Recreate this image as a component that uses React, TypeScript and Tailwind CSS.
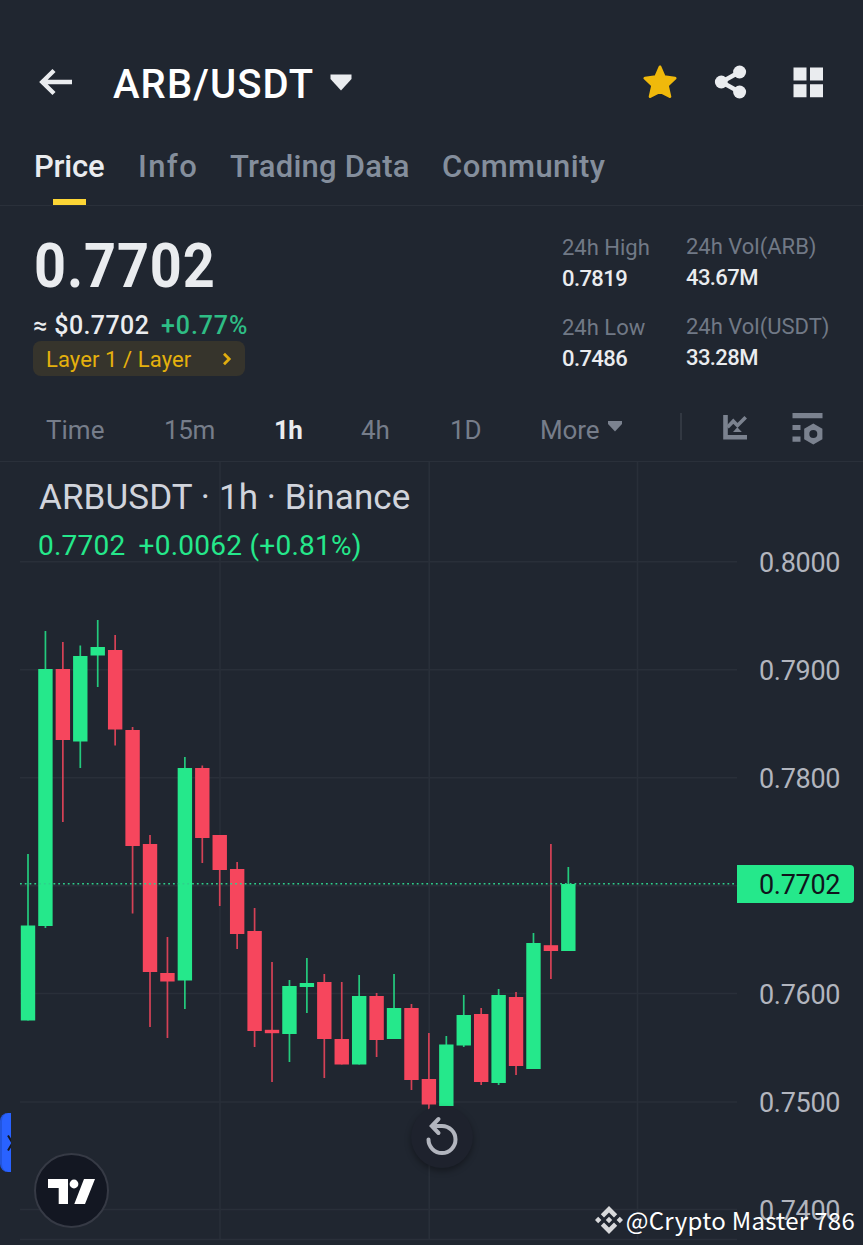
import { useState } from 'react';
import clsx from 'clsx';

const tabs = [
  { label: 'Price', className: 'w-[104px] tracking-[-0.2px]' },
  { label: 'Info', className: 'w-[92px] tracking-[1.4px]' },
  { label: 'Trading Data', className: 'w-[212px] tracking-[0.25px]' },
  { label: 'Community', className: 'tracking-[0.4px]' },
];

const stats = [
  [
    { label: '24h High', value: '0.7819' },
    { label: '24h Low', value: '0.7486' },
  ],
  [
    { label: '24h Vol(ARB)', value: '43.67M' },
    { label: '24h Vol(USDT)', value: '33.28M' },
  ],
];

const intervals = [
  { label: 'Time', className: 'w-[118px]' },
  { label: '15m', className: 'w-[110px] tracking-[-0.3px]' },
  { label: '1h', className: 'w-[87px] tracking-[-0.6px]' },
  { label: '4h', className: 'w-[89px]' },
  { label: '1D', className: 'w-[90px]' },
];

const axis = ['0.8000', '0.7900', '0.7800', '', '0.7600', '0.7500', '0.7400'];

// [direction, high, body top, body bottom, low] in chart pixels
const candles: [string, number, number, number, number][] = [
  ['up', 392, 463.5, 558.5, 558.5],
  ['up', 169, 207, 464, 466],
  ['down', 180, 207, 278, 360],
  ['up', 183.5, 194, 279.5, 306],
  ['up', 158, 185, 193.5, 225],
  ['down', 173, 188, 267.5, 283.5],
  ['down', 265, 268, 384, 451.5],
  ['down', 373, 382, 510, 565],
  ['down', 475, 511, 519.5, 576],
  ['up', 295, 306, 518.5, 547],
  ['down', 303.5, 306, 376, 401],
  ['down', 373, 373, 408, 444],
  ['down', 400, 407, 472, 487],
  ['down', 446, 469, 569, 585],
  ['down', 500, 567.8, 571.2, 620],
  ['up', 518, 524, 572, 600],
  ['up', 496, 521, 525, 551],
  ['down', 512, 520, 577, 616],
  ['down', 520, 577, 602.5, 602.5],
  ['up', 513, 534, 602.5, 602.5],
  ['down', 531, 534, 578, 595],
  ['up', 512, 546, 577, 577],
  ['down', 542, 546, 618, 628],
  ['down', 571, 617, 642.5, 654],
  ['up', 574, 582.5, 644, 644],
  ['up', 533, 553, 583.5, 585],
  ['down', 546, 552, 620, 623],
  ['up', 527, 533, 621, 623],
  ['down', 530, 535, 604, 613],
  ['up', 471, 481, 607, 607],
  ['down', 382, 483.2, 489, 517],
  ['up', 405, 422, 489, 489],
];

function Header() {
  return (
    <div className="flex h-12 items-center pl-[38px] pr-[39px]">
      <svg width="36" height="30" viewBox="38 67 36 30" fill="none" stroke="#eaecef" strokeWidth="4.4">
        <path d="M72 82H43M54 70.5L42.3 82L54 93.5" />
      </svg>
      <h1 className="ml-[39px] mt-1.5 text-[40px] leading-none font-medium tracking-[1.1px] text-white">ARB/USDT</h1>
      <svg className="ml-4" width="22" height="17" viewBox="0 0 22 17" fill="#eaecef">
        <path d="M.5 .5h21V5L11 16.5L.5 5z" />
      </svg>
      <div className="ml-auto flex items-center">
        <svg width="34" height="34" viewBox="0 0 34 34">
          <path
            d="M17 2L21.2 11.8L32 13.2L24.3 20.5L26.8 31.5L17 26.3L7.2 31.5L9.7 20.5L2 13.2L12.8 11.8Z"
            fill="#f0b90b"
            stroke="#f0b90b"
            strokeWidth="3"
            strokeLinejoin="round"
          />
        </svg>
        <svg className="ml-[37px]" width="34" height="34" viewBox="714 65 34 34" fill="#eaecef">
          <path d="M739.5 72L721.5 82L739.5 92" fill="none" stroke="#eaecef" strokeWidth="4.4" />
          <circle cx="721.3" cy="82" r="6.4" />
          <circle cx="739.6" cy="72" r="6.5" />
          <circle cx="739.6" cy="92" r="6.5" />
        </svg>
        <svg className="ml-[45px]" width="31" height="31" viewBox="0 0 31 31" fill="#eaecef">
          <path d="M.5 .5h13v13H.5zM17 .5h13v13H17zM.5 17.2h13v13H.5zM17 17.2h13v13H17z" />
        </svg>
      </div>
    </div>
  );
}

function Summary() {
  return (
    <section className="flex h-[190px]">
      <div className="w-[528px] pl-[34px] pt-[30px]">
        <div className="flex h-[60px] origin-left scale-x-90 items-center text-[62px] leading-none font-bold tracking-[1px] text-[#eaecef]">
          0.7702
        </div>
        <div className="-ml-px mt-3.5 flex h-[30px] items-center text-[25px] leading-none font-medium tracking-[0.4px]">
          <span className="w-[128px] whitespace-nowrap text-[#eaecef]">≈ $0.7702</span>
          <span className="tracking-[0.9px] text-[#2ebd85]">+0.77%</span>
        </div>
        <button className="-ml-px mt-px flex h-[35px] w-[212px] items-center justify-between rounded-lg bg-[#36342c] pt-0.5 pl-[13px] pr-[13px] text-[22px] leading-none tracking-[0.1px] text-[#e5b10d]">
          Layer 1 / Layer
          <svg className="mb-0.5" width="10" height="14" viewBox="0 0 10 14" fill="none" stroke="#e0ad10" strokeWidth="2.8">
            <path d="M2 1.8L7.2 7L2 12.2" />
          </svg>
        </button>
      </div>
      <div className="flex pt-[25px] pl-[34px]">
        {stats.map((column, i) => (
          <div key={i} className={clsx('space-y-[18px]', i === 0 && 'w-[124px] pt-px')}>
            {column.map((item) => (
              <div key={item.label} className="whitespace-nowrap text-[22px] leading-[31px]">
                <div className="text-[#717986]">{item.label}</div>
                <div className="font-medium tracking-[-0.6px] text-[#eaecef]">{item.value}</div>
              </div>
            ))}
          </div>
        ))}
      </div>
    </section>
  );
}

function IntervalBar() {
  const [active, setActive] = useState('1h');

  return (
    <div className="flex h-[66px] items-center border-b border-[#2a303a] pl-[46px] text-[26px] leading-none text-[#767d8a]">
      {intervals.map((item) => (
        <button
          key={item.label}
          onClick={() => setActive(item.label)}
          className={clsx('pt-0.5 text-left', item.className, active === item.label && 'font-bold text-[#eaecef]')}
        >
          {item.label}
        </button>
      ))}
      <button className="flex w-[140px] items-center pt-0.5 tracking-[-0.1px]">
        More
        <svg className="ml-[9px] mb-1.5" width="14" height="11" viewBox="0 0 14 11" fill="#7b828f">
          <path d="M0 0h14v3L7 10.5L0 3z" />
        </svg>
      </button>
      <div className="-mt-1 h-[27px] w-0.5 bg-[#323842]" />
      <svg className="ml-[41px] -mt-0.5" width="25" height="25" viewBox="0 0 25 25" fill="none" stroke="#7b828f">
        <path d="M2.5 0V22.2H24" strokeWidth="4.6" />
        <path d="M4.5 12.3L10.3 6.2L14.5 10.5L22.7 2.3" strokeWidth="3.6" />
        <path d="M10 17L14.3 12.3L18.8 17z" fill="#7b828f" stroke="none" />
      </svg>
      <svg className="ml-[44px]" width="31" height="32" viewBox="0 0 31 32" fill="#7b828f">
        <path d="M.5 0h30v5.2H.5zM.5 12h8v5H.5zM.5 23.6h8v5.2H.5z" />
        <path fillRule="evenodd" d="M21.3 10.5L30.4 15.8V26.2L21.3 31.4L12.2 26.2V15.8zM21.3 17a4 4 0 1 0 0 8a4 4 0 1 0 0-8z" />
      </svg>
    </div>
  );
}

function Candles() {
  return (
    <svg className="shrink-0" width="737" height="783" viewBox="0 0 737 783">
      <g stroke="#292f39" strokeWidth="1.6">
        {[99.7, 207.7, 315.7, 423.7, 531.5, 640, 747.5, 777.5].map((y) => (
          <path key={y} d={`M20 ${y}H737`} />
        ))}
        {[220, 429.2, 637.5].map((x) => (
          <path key={x} d={`M${x} 0V777`} />
        ))}
      </g>
      {candles.map(([dir, high, top, bottom, low], i) => {
        const x = 28 + i * 17.43;
        const color = dir === 'up' ? '#25e88b' : '#f6465d';
        return (
          <g key={i} fill={color}>
            <rect x={x - 0.85} y={high} width="1.7" height={low - high} opacity="0.85" />
            <rect x={x - 7.2} y={top} width="14.4" height={bottom - top} />
          </g>
        );
      })}
      <path d="M20 421.8H737" stroke="#2fd08c" strokeWidth="1.6" strokeDasharray="1.8 2.98" />
    </svg>
  );
}

function Chart() {
  return (
    <section className="relative flex h-[783px]">
      <Candles />
      <div className="w-[126px] pt-[47px]">
        {axis.map((price, i) => (
          <div key={i} className="flex h-[108px] items-center pl-[22px] text-[27px] leading-none tracking-[-0.3px] text-[#b2b5be]">
            {price}
          </div>
        ))}
      </div>
      <div className="absolute left-[737px] top-[403px] flex h-[38px] w-[117px] items-center rounded-r-[4px] bg-[#25e88b] pt-0.5 pl-[22px] text-[27px] leading-none tracking-[-0.3px] text-[#10141c]">
        0.7702
      </div>

      <div className="absolute left-[39px] top-4">
        <div className="text-[35px] leading-10 tracking-[0.1px] text-[#d1d4dc]">ARBUSDT · 1h · Binance</div>
        <div className="-ml-px mt-2 flex gap-[13px] text-[28px] leading-10 tracking-[0.25px] text-[#25e88b]">
          <span>0.7702</span>
          <span>+0.0062 (+0.81%)</span>
        </div>
      </div>

      <div className="absolute left-0 top-[651px] flex h-[59px] w-[11px] items-center overflow-hidden rounded-l-lg border-l-2 border-[#2255dd] bg-[#2962ff]">
        <svg className="ml-[5px] shrink-0" width="8" height="18" viewBox="0 0 8 18" fill="none" stroke="#131722" strokeWidth="2">
          <path d="M1 1.5L5.5 9L1 16.5" />
        </svg>
      </div>

      <div className="absolute left-[34px] top-[691px] flex size-[75px] items-center justify-center rounded-full border-2 border-[#363a45] bg-[#131722]">
        <svg className="mt-0.5" width="47" height="25" viewBox="0 0 47 25" fill="#fff">
          <path d="M0 0H20V25H10.7V9H0zM36 0H47L37 25H26.3z" />
          <circle cx="26" cy="5" r="4.4" />
        </svg>
      </div>

      <button className="absolute left-[411px] top-[644px] flex size-[62px] items-center justify-center rounded-full bg-[#1e222d] shadow-[0_3px_6px_rgba(0,0,0,0.35)]">
        <svg width="40" height="44" viewBox="422 1115 40 44" fill="none" stroke="#b2b5be" strokeWidth="4" strokeLinecap="round">
          <path d="M428.5 1139.5A13.5 13.5 0 1 0 442 1126H433" />
          <path d="M438.5 1119L431.8 1126L438.5 1133" />
        </svg>
      </button>
    </section>
  );
}

export default function App() {
  const [tab, setTab] = useState('Price');

  return (
    <div className="relative h-[1245px] w-[863px] overflow-hidden bg-[#202630] pt-[58px] font-['Roboto',sans-serif]">
      <Header />
      <nav className="mt-7 flex h-[72px] border-b border-[#2a303a] pl-[34px] text-[31px] font-medium text-[#848e9c]">
        {tabs.map((item) => (
          <button
            key={item.label}
            onClick={() => setTab(item.label)}
            className={clsx('relative h-[66px] whitespace-nowrap text-left', item.className, tab === item.label && 'text-[#eaecef]')}
          >
            {item.label}
            {tab === item.label && <span className="absolute left-[19px] top-[65px] h-[6px] w-[33px] bg-[#fcd535]" />}
          </button>
        ))}
      </nav>
      <Summary />
      <IntervalBar />
      <Chart />

      <div className="absolute right-2 bottom-[10px] flex h-[30px] items-center font-['Noto_Sans_CJK_SC',sans-serif] text-[24px] leading-none tracking-[0.3px] whitespace-nowrap text-white text-shadow-2xs">
        <svg className="mr-[3px]" width="28" height="28" viewBox="0 0 28 28" fill="#d8d9db">
          <path d="M14 0L22.2 8.2L19 11.4L14 6.4L9 11.4L5.8 8.2z" />
          <path d="M14 28L22.2 19.8L19 16.6L14 21.6L9 16.6L5.8 19.8z" />
          <path d="M14 10.8L17.2 14L14 17.2L10.8 14zM3.2 10.8L6.4 14L3.2 17.2L0 14zM24.8 10.8L28 14L24.8 17.2L21.6 14z" />
        </svg>
        @Crypto Master 786
      </div>
    </div>
  );
}
